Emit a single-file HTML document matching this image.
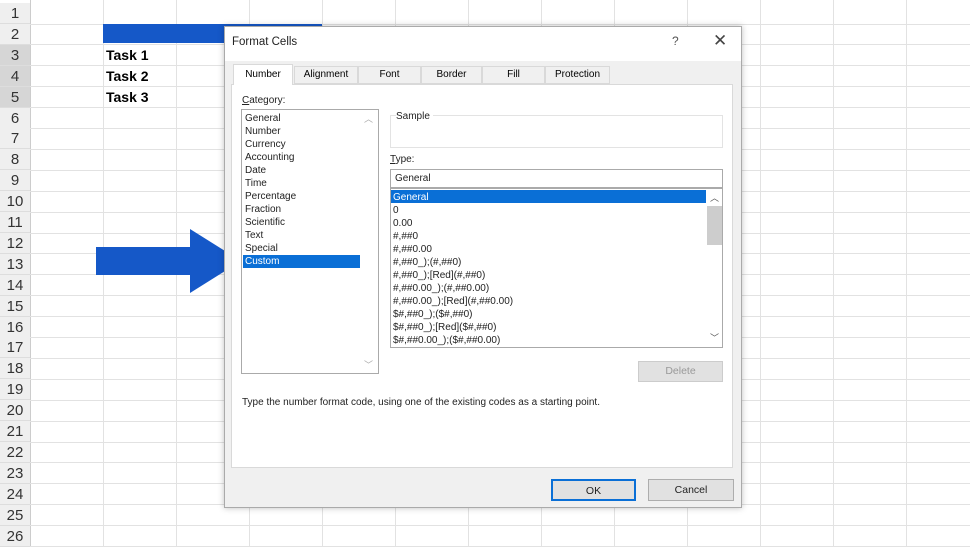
<!DOCTYPE html><html><head><style>
*{margin:0;padding:0;box-sizing:border-box}
body{width:970px;height:546px;overflow:hidden;background:#fff;font-family:"Liberation Sans",sans-serif;position:relative}
.a{position:absolute}
.rh{position:absolute;left:0;width:30px;background:#efefef;border-bottom:1px solid #ddd;text-align:center;font-size:15px;color:#333;line-height:21px}
.vl{position:absolute;top:0;width:1px;height:546px;background:#e2e2e2}
.hl{position:absolute;left:30px;width:940px;height:1px;background:#e2e2e2}
.d{font-size:10px;color:#222}
.li{position:absolute;font-size:10px;color:#222;line-height:13px}
.btn{position:absolute;background:#e1e1e1;border:1px solid #adadad;font-size:10.5px;text-align:center;color:#222}
</style></head><body>
<div class="a" style="left:30px;top:0;width:1px;height:546px;background:#ccc"></div>
<script>
var h='';for(var i=0;i<26;i++){var y=3+i*20.9;h+='<div class="rh" style="top:'+y+'px;height:21px;'+(i>=2&&i<=4?'background:#d6d6d6;':'')+'">'+(i+1)+'</div><div class="hl" style="top:'+(y+20.5)+'px"></div>';}
for(var x=103;x<970;x+=73)h+='<div class="vl" style="left:'+x+'px"></div>';
document.write(h);
</script>
<div class="a" style="left:103px;top:24px;width:219px;height:19px;background:#1558c8"></div>
<div class="a" style="left:106px;top:45px;font-weight:bold;font-size:14px;line-height:21px">Task 1<br>Task 2<br>Task 3</div>
<svg class="a" style="left:96px;top:229px" width="146" height="64"><polygon points="0,18 94,18 94,0 145,32 94,64 94,46 0,46" fill="#1558c8"/></svg>
<div class="a" style="left:224px;top:26px;width:518px;height:482px;background:#f0f0f0;border:1px solid #aaa;box-shadow:0 0 6px rgba(0,0,0,.25)">
 <div class="a" style="left:0;top:0;width:516px;height:34px;background:#fff"></div>
 <div class="a" style="left:7px;top:9px;font-size:11.5px;color:#222">Format Cells</div>
 <div class="a" style="left:447px;top:7px;font-size:12px;color:#555">?</div>
 <div class="a" style="left:488px;top:4px;font-size:17px;color:#444">✕</div>
</div>
<div class="a" style="left:231px;top:84px;width:502px;height:384px;background:#fff;border:1px solid #d9d9d9"></div>
<div class="a" style="left:233px;top:64px;width:60px;height:21px;background:#fff;border:1px solid #d9d9d9;border-bottom:none;font-size:10px;text-align:center;line-height:20px">Number</div>
<div class="a" style="left:294px;top:66px;width:64px;height:18px;background:#f0f0f0;border:1px solid #d9d9d9;font-size:10px;text-align:center;line-height:16px">Alignment</div>
<div class="a" style="left:358px;top:66px;width:63px;height:18px;border:1px solid #d9d9d9;font-size:10px;text-align:center;line-height:16px">Font</div>
<div class="a" style="left:421px;top:66px;width:61px;height:18px;border:1px solid #d9d9d9;font-size:10px;text-align:center;line-height:16px">Border</div>
<div class="a" style="left:482px;top:66px;width:63px;height:18px;border:1px solid #d9d9d9;font-size:10px;text-align:center;line-height:16px">Fill</div>
<div class="a" style="left:545px;top:66px;width:65px;height:18px;border:1px solid #d9d9d9;font-size:10px;text-align:center;line-height:16px">Protection</div>
<div class="a d" style="left:242px;top:95px"><u>C</u>ategory:</div>
<div class="a" style="left:241px;top:109px;width:138px;height:265px;border:1px solid #aaa"></div>
<div class="a" style="left:364px;top:112px;font-size:9px;color:#aaa">︿</div>
<div class="a" style="left:364px;top:358px;font-size:9px;color:#aaa">﹀</div>
<div class="a" style="left:243px;top:255px;width:117px;height:13px;background:#0a6fd6"></div>
<div class="li" style="left:245px;top:112px">General<br>Number<br>Currency<br>Accounting<br>Date<br>Time<br>Percentage<br>Fraction<br>Scientific<br>Text<br>Special<br><span style="color:#fff">Custom</span></div>
<div class="a" style="left:390px;top:115px;width:333px;height:33px;border:1px solid #e3e3e3"></div>
<div class="a d" style="left:396px;top:111px;background:#fff;padding-right:3px">Sample</div>
<div class="a d" style="left:390px;top:154px"><u>T</u>ype:</div>
<div class="a d" style="left:390px;top:169px;width:333px;height:19px;border:1px solid #aaa;padding:3px 4px">General</div>
<div class="a" style="left:390px;top:188px;width:333px;height:160px;border:1px solid #aaa"></div>
<div class="a" style="left:391px;top:190px;width:315px;height:13px;background:#0a6fd6"></div>
<div class="a" style="left:707px;top:206px;width:15px;height:39px;background:#cdcdcd"></div>
<div class="a" style="left:710px;top:191px;font-size:9px;color:#555">︿</div>
<div class="a" style="left:710px;top:331px;font-size:9px;color:#555">﹀</div>
<div class="li" style="left:393px;top:191px"><span style="color:#fff">General</span><br>0<br>0.00<br>#,##0<br>#,##0.00<br>#,##0_);(#,##0)<br>#,##0_);[Red](#,##0)<br>#,##0.00_);(#,##0.00)<br>#,##0.00_);[Red](#,##0.00)<br>$#,##0_);($#,##0)<br>$#,##0_);[Red]($#,##0)<br>$#,##0.00_);($#,##0.00)</div>
<div class="btn" style="left:638px;top:361px;width:85px;height:21px;line-height:19px;color:#999;border-color:#ccc">Delete</div>
<div class="a d" style="left:242px;top:397px">Type the number format code, using one of the existing codes as a starting point.</div>
<div class="btn" style="left:551px;top:479px;width:85px;height:22px;line-height:20px;border:2px solid #0a6fd6">OK</div>
<div class="btn" style="left:648px;top:479px;width:86px;height:22px;line-height:20px">Cancel</div>
</body></html>
